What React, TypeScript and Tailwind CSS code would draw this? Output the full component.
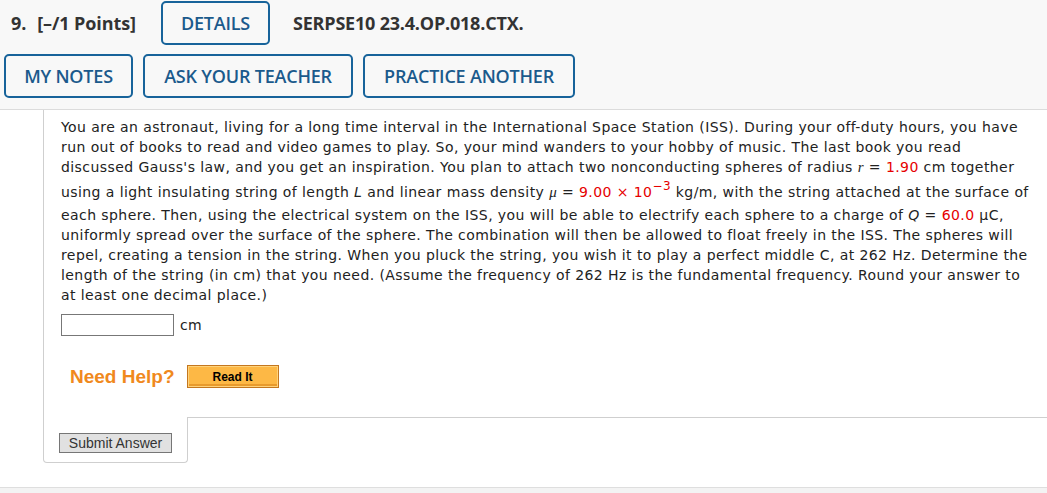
import React from "react";

const body = { fontFamily: '"DejaVu Sans", Verdana, sans-serif' };
const head = { fontFamily: '"Open Sans", "Liberation Sans", sans-serif' };
const arial = { fontFamily: '"Liberation Sans", Arial, sans-serif' };
const serif = { fontFamily: '"Liberation Serif", "Times New Roman", serif' };

function OutlineButton({ label, w }: { label: string; w: string }) {
  return (
    <button
      className={`h-[44px] ${w} flex items-center justify-center rounded-[5px] border-2 border-[#17639a] text-[#1b5a8c] text-[18px] font-semibold tracking-[-0.2px]`}
      style={head}
    >
      {label}
    </button>
  );
}

const Red = ({ children }: { children: React.ReactNode }) => <span className="text-[#e60000]">{children}</span>;

export default function App() {
  return (
    <div className="w-[1047px] h-[493px] bg-white text-[#222] overflow-hidden flex flex-col">
      {/* question header */}
      <header className="bg-[#f8f8f8] border-b border-[#dcdcdc] h-[110px] pt-px" style={head}>
        <div className="flex items-center h-[44px]">
          <div className="pl-[11px] w-[161px] text-[18px] font-bold text-[#333] tracking-[-0.1px]">
            9.<span className="ml-[11px]">[–/1 Points]</span>
          </div>
          <OutlineButton label="DETAILS" w="w-[109px]" />
          <div className="ml-[23px] text-[18px] font-bold text-[#333] tracking-[-0.2px]">SERPSE10 23.4.OP.018.CTX.</div>
        </div>
        <div className="flex gap-[10px] pl-[4px] mt-[9px]">
          <OutlineButton label="MY NOTES" w="w-[129px]" />
          <OutlineButton label="ASK YOUR TEACHER" w="w-[210px]" />
          <OutlineButton label="PRACTICE ANOTHER" w="w-[212px]" />
        </div>
      </header>

      {/* question body */}
      <div className="ml-[43px] flex flex-col">
        <div className="border-l border-[#cfcfcf] pl-[17px] pt-[7px] text-[14px] leading-[20px] tracking-[0.42px]" style={body}>
          <p className="whitespace-nowrap">
            You are an astronaut, living for a long time interval in the International Space Station (ISS). During your off-duty hours, you have
            <br />
            run out of books to read and video games to play. So, your mind wanders to your hobby of music. The last book you read
            <br />
            discussed Gauss's law, and you get an inspiration. You plan to attach two nonconducting spheres of radius{" "}
            <i style={serif} className="text-[15px]">r</i> = <Red>1.90</Red> cm together
            <br />
            <span className="inline-block mt-[5px] mb-[3px]">
              using a light insulating string of length <i>L</i> and linear mass density{" "}
              <i style={serif} className="text-[15px]">μ</i> = <Red>9.00 × 10</Red>
              <sup className="text-[12px] text-[#e60000] -top-[7px]">−3</sup> kg/m, with the string attached at the surface of
            </span>
            <br />
            each sphere. Then, using the electrical system on the ISS, you will be able to electrify each sphere to a charge of <i>Q</i> ={" "}
            <Red>60.0</Red> μC,
            <br />
            uniformly spread over the surface of the sphere. The combination will then be allowed to float freely in the ISS. The spheres will
            <br />
            repel, creating a tension in the string. When you pluck the string, you wish it to play a perfect middle C, at 262 Hz. Determine the
            <br />
            length of the string (in cm) that you need. (Assume the frequency of 262 Hz is the fundamental frequency. Round your answer to
            <br />
            at least one decimal place.)
          </p>

          <div className="flex items-center gap-[6px] mt-[9px]">
            <input className="w-[113px] h-[22px] border border-[#777] bg-white" />
            <span>cm</span>
          </div>

          <div className="flex items-center mt-[29px] pl-[9px] h-[23px] tracking-normal" style={arial}>
            <span className="text-[19px] font-bold text-[#f0891d]">Need Help?</span>
            <button className="ml-[12px] w-[92px] h-[23px] border border-[#c4771f] bg-[#fdb845] shadow-[inset_0_0_0_1px_#ffd27a,inset_0_-2px_0_1px_#e89a2c] text-[12px] font-bold text-black">
              Read It
            </button>
          </div>
          <div className="h-[29px]" />
        </div>

        <div className="flex">
          <div className="w-[145px] h-[46px] border-l border-r border-b border-[#cfcfcf] rounded-b-[4px] pl-[15px] pt-[13px]">
            <button
              className="w-[113px] h-[20px] border border-[#767676] bg-[#e1e1e1] text-[14px] leading-[18px] text-[#333]"
              style={arial}
            >
              Submit Answer
            </button>
          </div>
          <div className="flex-1 border-t border-[#cfcfcf]" />
        </div>
      </div>

      <div className="mt-auto h-[6px] border-t border-[#dedede] bg-[#f3f3f3]" />
    </div>
  );
}
